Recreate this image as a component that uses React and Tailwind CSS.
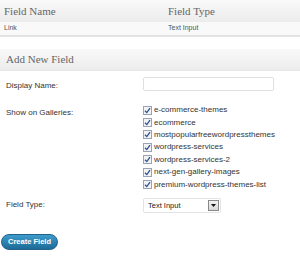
const galleries = [
  'e-commerce-themes',
  'ecommerce',
  'mostpopularfreewordpressthemes',
  'wordpress-services',
  'wordpress-services-2',
  'next-gen-gallery-images',
  'premium-wordpress-themes-list',
];

const Check = () => (
  <span className="w-[9px] h-[9px] border border-[#9aa3b5] bg-[#f3f3f3] flex items-center justify-center shrink-0">
    <svg width="7" height="7" viewBox="0 0 7 7">
      <path d="M1 3.8 L2.8 5.6 L6 1.2" stroke="#2c4f9a" strokeWidth="1.3" fill="none" />
    </svg>
  </span>
);

const App = () => {
  return (
    <div className="w-[300px] h-[264px] bg-white overflow-hidden font-['Liberation_Sans',Arial,sans-serif] text-[#333]">
      <div className="h-[22px] flex items-center bg-gradient-to-b from-[#f9f9f9] to-[#ececec] font-['Liberation_Serif',serif] font-normal text-[11px] text-[#666]">
        <span className="pl-[4px] w-[168px]">Field Name</span>
        <span>Field Type</span>
      </div>
      <div className="h-[15px] flex items-center bg-[#f9f9f9] border-b-[2px] border-[#e3e3e3] text-[7px] text-[#555]">
        <span className="pl-[4px] w-[168px]">Link</span>
        <span>Text Input</span>
      </div>
      <div className="h-[12px]" />
      <div className="h-[22px] flex items-center bg-gradient-to-b from-[#f9f9f9] to-[#ececec] border-b border-[#e6e6e6] font-['Liberation_Serif',serif] font-normal text-[11px] text-[#666]">
        <span className="pl-[6px]">Add New Field</span>
      </div>

      <div className="flex items-start mt-[6px]">
        <span className="pl-[6px] w-[143px] text-[8px] pt-[3px]">Display Name:</span>
        <span className="w-[131px] h-[14px] border border-[#dfdfdf] rounded-[2px] bg-white" />
      </div>

      <div className="flex items-start mt-[14px]">
        <span className="pl-[6px] w-[143px] text-[8px] pt-[1px]">Show on Galleries:</span>
        <div className="flex flex-col gap-[4px]">
          {galleries.map((g) => (
            <label key={g} className="flex items-center gap-[2px] h-[8.4px] text-[8px] text-[#333]">
              <Check />
              <span>{g}</span>
            </label>
          ))}
        </div>
      </div>

      <div className="flex items-start mt-[9px]">
        <span className="pl-[6px] w-[143px] text-[8px] pt-[1px]">Field Type:</span>
        <div className="w-[78px] h-[15px] border border-[#e3e3e3] rounded-[2px] bg-white flex items-center justify-between pl-[4px] pr-[1px]">
          <span className="text-[7.5px] text-[#222]">Text Input</span>
          <span className="w-[11px] h-[11px] border border-[#888] bg-gradient-to-b from-[#f3f3f3] to-[#d8d8d8] flex items-center justify-center">
            <svg width="5" height="3" viewBox="0 0 5 3"><path d="M0 0 H5 L2.5 3 Z" fill="#111" /></svg>
          </span>
        </div>
      </div>

      <div className="mt-[21px] pl-[1px]">
        <button className="w-[57px] h-[16px] rounded-[8px] bg-gradient-to-b from-[#3d9ccc] to-[#1c6b97] border border-[#23628a] text-white text-[7.5px] font-bold flex items-center justify-center">
          Create Field
        </button>
      </div>
    </div>
  );
};

export default App;
